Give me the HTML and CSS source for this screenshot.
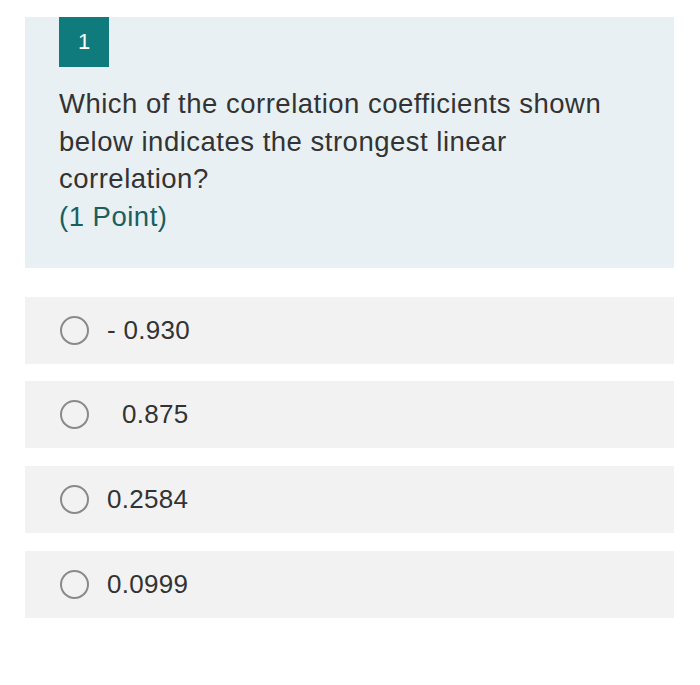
FILE: index.html
```html
<!DOCTYPE html>
<html>
<head>
<meta charset="utf-8">
<link rel="stylesheet" href="styles.css">
</head>
<body>
<div class="page">
  <div class="question">
    <div class="badge">1</div>
    <div class="qtext">Which of the correlation coefficients shown below indicates the strongest linear correlation?</div>
    <div class="points">(1 Point)</div>
  </div>
  <div class="options">
    <label class="option"><span class="radio"></span><span class="val">- 0.930</span></label>
    <label class="option"><span class="radio"></span><span class="val">  0.875</span></label>
    <label class="option"><span class="radio"></span><span class="val">0.2584</span></label>
    <label class="option"><span class="radio"></span><span class="val">0.0999</span></label>
  </div>
</div>
</body>
</html>
```
FILE: styles.css
```css
html, body {
  margin: 0;
  padding: 0;
  background: #ffffff;
}
.page {
  padding: 17px 26px 0 25px;
  font-family: "Liberation Sans", Arial, Helvetica, sans-serif;
  color: #333333;
}
.question {
  background: #e8f0f4;
  padding: 0 40px 33px 34px;
}
.badge {
  width: 50px;
  height: 50px;
  background: #0f7b7c;
  color: #ffffff;
  font-size: 22px;
  display: flex;
  align-items: center;
  justify-content: center;
}
.qtext {
  margin-top: 18px;
  font-size: 27.5px;
  letter-spacing: 0.5px;
  line-height: 37.5px;
  width: 570px;
}
.points {
  font-size: 27.5px;
  letter-spacing: 0.5px;
  line-height: 37px;
  color: #1b5e5e;
}
.options {
  margin-top: 29px;
  display: flex;
  flex-direction: column;
  gap: 17.8px;
}
.option {
  background: #f2f2f2;
  height: 67px;
  display: flex;
  align-items: center;
  padding-left: 35px;
}
.radio {
  width: 25px;
  height: 25px;
  border: 2px solid #8a8a8a;
  border-radius: 50%;
  flex: none;
}
.val {
  margin-left: 18px;
  font-size: 26px;
  letter-spacing: 0.3px;
  white-space: pre;
  color: #333333;
}
```
